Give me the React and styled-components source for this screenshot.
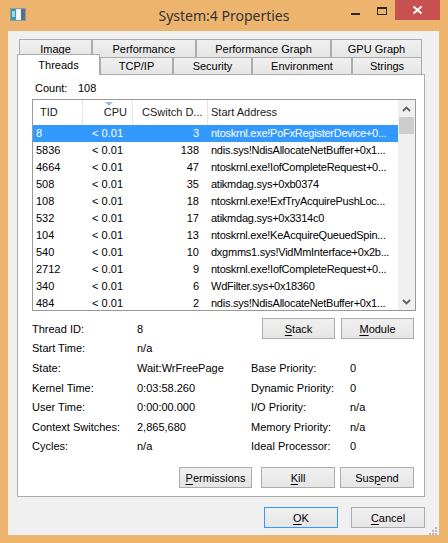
import React from "react";
import styled, { createGlobalStyle } from "styled-components";

const GlobalStyle = createGlobalStyle`
  html, body {
    margin: 0;
    padding: 0;
  }
  body {
    background: #ecb46c;
    font-family: "Liberation Sans", Arial, sans-serif;
    font-size: 11px;
    color: #000;
  }
`;

const backTabs = [
  { label: "Image", w: 73 },
  { label: "Performance", w: 104 },
  { label: "Performance Graph", w: 135 },
  { label: "GPU Graph", w: 91 },
];

const frontTabs = [
  { label: "Threads", w: 83, active: true },
  { label: "TCP/IP", w: 73 },
  { label: "Security", w: 79 },
  { label: "Environment", w: 100 },
  { label: "Strings", w: 70 },
];

const threads = [
  ["8", "< 0.01", "3", "ntoskrnl.exe!PoFxRegisterDevice+0..."],
  ["5836", "< 0.01", "138", "ndis.sys!NdisAllocateNetBuffer+0x1..."],
  ["4664", "< 0.01", "47", "ntoskrnl.exe!IofCompleteRequest+0..."],
  ["508", "< 0.01", "35", "atikmdag.sys+0xb0374"],
  ["108", "< 0.01", "18", "ntoskrnl.exe!ExfTryAcquirePushLoc..."],
  ["532", "< 0.01", "17", "atikmdag.sys+0x3314c0"],
  ["104", "< 0.01", "13", "ntoskrnl.exe!KeAcquireQueuedSpin..."],
  ["540", "< 0.01", "10", "dxgmms1.sys!VidMmInterface+0x2b..."],
  ["2712", "< 0.01", "9", "ntoskrnl.exe!IofCompleteRequest+0..."],
  ["340", "< 0.01", "6", "WdFilter.sys+0x18360"],
  ["484", "< 0.01", "2", "ndis.sys!NdisAllocateNetBuffer+0x1..."],
];

const App = () => {
  return (
    <>
      <GlobalStyle />
      <Frame>
        <TitleBar>
          <AppIcon width="16" height="13" viewBox="0 0 16 13">
            <rect x="0.5" y="0.5" width="15" height="12" fill="#e8eef2" stroke="#8a9aa4" />
            <rect x="1" y="1" width="5" height="11" fill="#3f9aa8" />
            <rect x="2" y="3" width="3" height="6" fill="#9fd6dc" />
            <rect x="11" y="1" width="4" height="11" fill="#5d6f7a" />
            <rect x="7" y="3" width="3" height="7" fill="#ffffff" />
          </AppIcon>
          <Title>System:4 Properties</Title>
          <Controls>
            <CtrlButton>
              <svg width="26" height="20" viewBox="0 0 26 20">
                <rect x="8" y="13" width="9" height="2" fill="#2b2b2b" />
              </svg>
            </CtrlButton>
            <CtrlButton>
              <svg width="26" height="20" viewBox="0 0 26 20">
                <rect x="8.5" y="7.5" width="9" height="7" fill="none" stroke="#2b2b2b" />
                <rect x="8" y="7" width="10" height="2" fill="#2b2b2b" />
              </svg>
            </CtrlButton>
            <CloseButton>
              <svg width="45" height="20" viewBox="0 0 45 20">
                <path d="M18.5 6.5 L26.5 13.5 M26.5 6.5 L18.5 13.5" stroke="#fff" strokeWidth="1.9" />
              </svg>
            </CloseButton>
          </Controls>
        </TitleBar>

        <Client>
          <TabStrip>
            <TabRow $h={18} $indent={2}>
              {backTabs.map((t) => (
                <Tab key={t.label} $w={t.w}>
                  {t.label}
                </Tab>
              ))}
            </TabRow>
            <TabRow $h={17} $indent={0}>
              {frontTabs.map((t) => (
                <Tab key={t.label} $w={t.w} $active={t.active}>
                  {t.label}
                </Tab>
              ))}
            </TabRow>
          </TabStrip>

          <Panel>
            <CountRow>
              <CountLabel>Count:</CountLabel>
              <span>108</span>
            </CountRow>

            <ListView>
              <ListBody>
                <HeaderRow>
                  <HeadCell $pl={7}>TID</HeadCell>
                  <HeadCell $right $pr={5}>
                    <SortArrow />
                    CPU
                  </HeadCell>
                  <HeadCell $pl={9}>CSwitch D...</HeadCell>
                  <HeadCell $pl={3} $last>
                    Start Address
                  </HeadCell>
                </HeaderRow>
                {threads.map((r, i) => (
                  <Row key={r[0]} $selected={i === 0}>
                    <Cell $pl={3}>{r[0]}</Cell>
                    <Cell $right $pr={10}>
                      {r[1]}
                    </Cell>
                    <Cell $right $pr={9}>
                      {r[2]}
                    </Cell>
                    <Cell $pl={3} $tight>
                      {r[3]}
                    </Cell>
                  </Row>
                ))}
              </ListBody>
              <ScrollBar>
                <ScrollArrow>
                  <svg width="9" height="6" viewBox="0 0 9 6">
                    <path d="M1 5 L4.5 1.5 L8 5" fill="none" stroke="#606060" strokeWidth="1.8" />
                  </svg>
                </ScrollArrow>
                <Thumb />
                <Track />
                <ScrollArrow>
                  <svg width="9" height="6" viewBox="0 0 9 6">
                    <path d="M1 1 L4.5 4.5 L8 1" fill="none" stroke="#606060" strokeWidth="1.8" />
                  </svg>
                </ScrollArrow>
              </ScrollBar>
            </ListView>

            <Details>
              <Label>Thread ID:</Label>
              <Value>8</Value>
              <InlineButtons>
                <Button $w={73}>
                  <u>S</u>tack
                </Button>
                <Button $w={73}>
                  <u>M</u>odule
                </Button>
              </InlineButtons>

              <Label>Start Time:</Label>
              <Value>n/a</Value>
              <Empty />
              <Empty />

              <Label>State:</Label>
              <Value>Wait:WrFreePage</Value>
              <Label>Base Priority:</Label>
              <Value>0</Value>

              <Label>Kernel Time:</Label>
              <Value>0:03:58.260</Value>
              <Label>Dynamic Priority:</Label>
              <Value>0</Value>

              <Label>User Time:</Label>
              <Value>0:00:00.000</Value>
              <Label>I/O Priority:</Label>
              <Value>n/a</Value>

              <Label>Context Switches:</Label>
              <Value>2,865,680</Value>
              <Label>Memory Priority:</Label>
              <Value>n/a</Value>

              <Label>Cycles:</Label>
              <Value>n/a</Value>
              <Label>Ideal Processor:</Label>
              <Value>0</Value>
            </Details>

            <ActionRow>
              <Button $w={73} $mr={9}>
                <u>P</u>ermissions
              </Button>
              <Button $w={74} $mr={5}>
                <u>K</u>ill
              </Button>
              <Button $w={74}>
                Sus<u>p</u>end
              </Button>
            </ActionRow>
          </Panel>

          <Footer>
            <Button $w={74} $default>
              <u>O</u>K
            </Button>
            <Button $w={74}>
              <u>C</u>ancel
            </Button>
          </Footer>

          <Grip width="10" height="9" viewBox="0 0 10 9">
            <rect x="7" y="1" width="2" height="2" fill="#b8b8b8" />
            <rect x="4" y="4" width="2" height="2" fill="#b8b8b8" />
            <rect x="7" y="4" width="2" height="2" fill="#b8b8b8" />
            <rect x="1" y="7" width="2" height="2" fill="#b8b8b8" />
            <rect x="4" y="7" width="2" height="2" fill="#b8b8b8" />
            <rect x="7" y="7" width="2" height="2" fill="#b8b8b8" />
          </Grip>
        </Client>
      </Frame>
    </>
  );
};

export default App;

const Frame = styled.div`
  width: 448px;
  height: 543px;
  background: #ecb46c;
  display: flex;
  flex-direction: column;
  overflow: hidden;
`;

const TitleBar = styled.div`
  height: 31px;
  flex-shrink: 0;
  display: grid;
  grid-template-columns: 1fr auto 1fr;
  align-items: start;
`;

const AppIcon = styled.svg`
  margin: 8px 0 0 10px;
  display: block;
`;

const Title = styled.div`
  font-family: "Noto Sans", "Open Sans", sans-serif;
  font-size: 14px;
  line-height: 20px;
  margin-top: 6px;
  color: #333;
`;

const Controls = styled.div`
  display: flex;
  justify-content: flex-end;
  padding-right: 8px;
`;

const CtrlButton = styled.div`
  width: 26px;
  height: 20px;
  svg {
    display: block;
  }
`;

const CloseButton = styled.div`
  width: 45px;
  height: 20px;
  background: #c75050;
  svg {
    display: block;
  }
`;

const Client = styled.div`
  position: relative;
  flex: 1;
  margin: 0 9px 8px 8px;
  background: #f0f0f0;
  padding: 8px 14px 0 9px;
  display: flex;
  flex-direction: column;
`;

const TabStrip = styled.div`
  display: flex;
  flex-direction: column;
  position: relative;
  z-index: 1;
`;

const TabRow = styled.div`
  display: flex;
  align-items: flex-end;
  height: ${(p) => p.$h}px;
  padding-left: ${(p) => p.$indent}px;
`;

const Tab = styled.div`
  box-sizing: border-box;
  width: ${(p) => p.$w}px;
  height: ${(p) => (p.$active ? "21px" : "100%")};
  margin-bottom: ${(p) => (p.$active ? "-1px" : "0")};
  border: 1px solid #acacac;
  border-bottom: none;
  background: ${(p) => (p.$active ? "#fff" : "linear-gradient(#f0f0f0, #e5e5e5)")};
  display: flex;
  align-items: center;
  justify-content: center;
  padding-bottom: ${(p) => (p.$active ? "1px" : "0")};
  white-space: nowrap;
`;

const Panel = styled.div`
  box-sizing: border-box;
  width: 408px;
  height: 423px;
  border: 1px solid #acacac;
  background: #fff;
  padding: 6px 8px 8px 14px;
  display: flex;
  flex-direction: column;
`;

const CountRow = styled.div`
  display: flex;
  line-height: 14px;
  padding-left: 3px;
`;

const CountLabel = styled.span`
  width: 43px;
`;

const ListView = styled.div`
  box-sizing: border-box;
  height: 212px;
  margin-top: 4px;
  border: 1px solid #9a9a9a;
  display: flex;
  overflow: hidden;
`;

const ListBody = styled.div`
  flex: 1;
  min-width: 0;
  display: flex;
  flex-direction: column;
  overflow: hidden;
`;

const columns = "50px 50px 75px 1fr";

const HeaderRow = styled.div`
  display: grid;
  grid-template-columns: ${columns};
  height: 25px;
  flex-shrink: 0;
  color: #1a1a1a;
`;

const HeadCell = styled.div`
  position: relative;
  box-sizing: border-box;
  border-right: ${(p) => (p.$last ? "none" : "1px solid #e5e5e5")};
  padding-left: ${(p) => p.$pl || 0}px;
  padding-right: ${(p) => p.$pr || 0}px;
  text-align: ${(p) => (p.$right ? "right" : "left")};
  line-height: 25px;
  white-space: nowrap;
  overflow: hidden;
`;

const SortArrow = styled.span`
  position: absolute;
  top: 2px;
  left: 22px;
  width: 0;
  height: 0;
  border-left: 4px solid transparent;
  border-right: 4px solid transparent;
  border-top: 4px solid #97bde0;
`;

const Row = styled.div`
  display: grid;
  grid-template-columns: ${columns};
  height: 17px;
  flex-shrink: 0;
  line-height: 17px;
  background: ${(p) => (p.$selected ? "#3399ff" : "transparent")};
  color: ${(p) => (p.$selected ? "#fff" : "#000")};
`;

const Cell = styled.div`
  box-sizing: border-box;
  padding-left: ${(p) => p.$pl || 0}px;
  padding-right: ${(p) => p.$pr || 0}px;
  text-align: ${(p) => (p.$right ? "right" : "left")};
  letter-spacing: ${(p) => (p.$tight ? "-0.25px" : "0")};
  white-space: nowrap;
  overflow: hidden;
`;

const ScrollBar = styled.div`
  width: 17px;
  flex-shrink: 0;
  background: #f0f0f0;
  display: flex;
  flex-direction: column;
`;

const ScrollArrow = styled.div`
  height: 17px;
  display: flex;
  align-items: center;
  justify-content: center;
  svg {
    display: block;
  }
`;

const Thumb = styled.div`
  height: 17px;
  margin: 0 1px;
  background: #cdcdcd;
`;

const Track = styled.div`
  flex: 1;
`;

const Details = styled.div`
  display: grid;
  grid-template-columns: 105px 114px 99px 1fr;
  grid-auto-rows: 19.6px;
  align-items: center;
  margin-top: 8px;
  line-height: 14px;
`;

const Label = styled.div`
  white-space: nowrap;
`;

const Value = styled.div`
  white-space: nowrap;
`;

const Empty = styled.div``;

const InlineButtons = styled.div`
  grid-column: 3 / 5;
  justify-self: end;
  display: flex;
  gap: 6px;
  margin-right: 2px;
`;

const Button = styled.button`
  box-sizing: border-box;
  width: ${(p) => p.$w}px;
  height: 21px;
  margin: 0 ${(p) => p.$mr || 0}px 0 0;
  padding: 0;
  border: 1px solid ${(p) => (p.$default ? "#3399ff" : "#acacac")};
  background: linear-gradient(#f0f0f0, #e5e5e5);
  font-family: "Liberation Sans", Arial, sans-serif;
  font-size: 11px;
  color: #000;
  u {
    text-decoration: underline;
    text-underline-offset: 2px;
  }
`;

const ActionRow = styled.div`
  margin-top: auto;
  display: flex;
  justify-content: flex-end;
  padding-right: 2px;
`;

const Footer = styled.div`
  display: flex;
  justify-content: flex-end;
  gap: 13px;
  margin-top: 10px;
`;

const Grip = styled.svg`
  position: absolute;
  right: 1px;
  bottom: 0;
  display: block;
`;
